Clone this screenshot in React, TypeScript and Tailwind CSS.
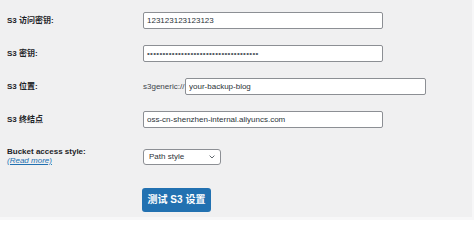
import React from 'react';

const FONT = { fontFamily: '"Liberation Sans", "Noto Sans CJK SC", sans-serif' };

function Label({ children }: { children: React.ReactNode }) {
  return <div className="w-[136px] shrink-0 text-[8px] font-bold text-[#1d2327] leading-[10px]">{children}</div>;
}

function TextField({ value, type = 'text', width = 'w-[240px]', extra = '' }: { value: string; type?: string; width?: string; extra?: string }) {
  return (
    <input
      type={type}
      readOnly
      defaultValue={value}
      className={`${width} ${extra} h-[17px] rounded-[2px] border border-[#8c8f94] bg-white px-[3px] text-[8px] text-[#2c3338] outline-none`}
    />
  );
}

export default function App() {
  return (
    <div className="h-[220px] w-[474px] bg-[#f7f7f8]" style={FONT}>
      <div className="h-[217px] w-[472px] bg-[#f0f0f1] pl-[7px] pt-[4px]">
        <div className="flex h-[33px] items-center">
          <Label>S3 访问密钥:</Label>
          <TextField value="123123123123123" />
        </div>
        <div className="flex h-[33px] items-center">
          <Label>S3 密钥:</Label>
          <TextField type="password" value="xxxxxxxxxxxxxxxxxxxxxxxxxxxxxxxxxxxx" extra="tracking-[0.3px] text-[#50575e]" />
        </div>
        <div className="flex h-[33px] items-center">
          <Label>S3 位置:</Label>
          <span className="w-[42px] text-[8px] text-[#3c434a]">s3generic://</span>
          <TextField value="your-backup-blog" width="w-[241px]" />
        </div>
        <div className="flex h-[33px] items-center">
          <Label>S3 终结点</Label>
          <TextField value="oss-cn-shenzhen-internal.aliyuncs.com" />
        </div>
        <div className="flex h-[41px] items-center">
          <div className="w-[136px] shrink-0 -mt-[2px] text-[8px] leading-[9px]">
            <div className="font-bold text-[#1d2327]">Bucket access style:</div>
            <a href="#" className="italic text-[#2271b1] underline">(Read more)</a>
          </div>
          <div className="relative flex h-[16px] w-[78px] items-center rounded-[3px] border border-[#8c8f94] bg-white pl-[5px] text-[8px] text-[#2c3338]">
            <span>Path style</span>
            <svg className="absolute right-[5px] top-[5px]" width="6" height="4" viewBox="0 0 6 4" fill="none">
              <path d="M0.6 0.6 L3 3 L5.4 0.6" stroke="#50575e" strokeWidth="0.9" />
            </svg>
          </div>
        </div>
        <div className="mt-[9px] pl-[135px]">
          <button className="h-[24px] w-[69px] rounded-[3px] bg-[#2271b1] text-[10px] font-bold text-white">
            测试 S3 设置
          </button>
        </div>
      </div>
    </div>
  );
}
